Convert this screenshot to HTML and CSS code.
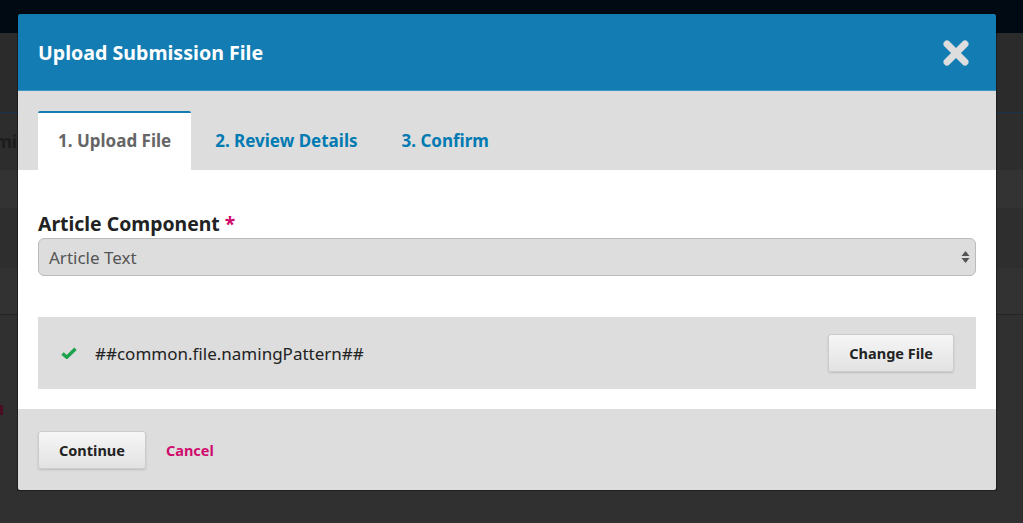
FILE: index.html
```html
<!DOCTYPE html>
<html lang="en">
<head>
  <meta charset="UTF-8">
  <meta name="viewport" content="width=device-width, initial-scale=1.0">
  <title>Upload Submission File</title>
  <link rel="stylesheet" href="styles.css">
</head>
<body>
  <div class="app">
    <div class="topbar"></div>
    <div class="bg-row bg-head"></div>
    <div class="bg-row bg-tabs"><span class="bg-tab-label">Submissions</span></div>
    <div class="bg-row bg-a"></div>
    <div class="bg-row bg-b"></div>
    <div class="bg-row bg-c"></div>
    <div class="bg-row bg-rest"><span class="bg-mark"></span></div>
  </div>

  <div class="modal">
    <div class="modal-header">
      <h1>Upload Submission File</h1>
      <button class="close" type="button" aria-label="Close">
        <svg width="26" height="26" viewBox="0 0 26 26">
          <path d="M4 4L22 22M22 4L4 22" stroke="#dddddd" stroke-width="7" stroke-linecap="round" fill="none"/>
        </svg>
      </button>
    </div>

    <div class="tabs">
      <a class="tab active">1. Upload File</a>
      <a class="tab">2. Review Details</a>
      <a class="tab">3. Confirm</a>
    </div>

    <div class="content">
      <label class="field-label" for="component">Article Component <span class="req">*</span></label>
      <div class="select">
        <span>Article Text</span>
        <span class="arrows">
          <svg width="9" height="14" viewBox="0 0 9 14">
            <path d="M4.5 1L8.5 6H0.5Z" fill="#555555"/>
            <path d="M4.5 13L8.5 8H0.5Z" fill="#555555"/>
          </svg>
        </span>
      </div>

      <div class="file-row">
        <svg class="check" width="16" height="12" viewBox="0 0 16 12">
          <path d="M1.5 6.5L5.8 10.3L14.5 1.8" stroke="#1ea24c" stroke-width="3.4" fill="none"/>
        </svg>
        <span class="file-name">##common.file.namingPattern##</span>
        <button class="btn" type="button">Change File</button>
      </div>
    </div>

    <div class="modal-footer">
      <button class="btn" type="button">Continue</button>
      <a class="cancel">Cancel</a>
    </div>
  </div>
</body>
</html>
```

FILE: styles.css
```css
body {
  margin: 0;
  font-family: "Noto Sans", "Open Sans", sans-serif;
  background-color: #303030;
  overflow: hidden;
}
.app {
  height: 523px;
}
.topbar {
  height: 33px;
  background-color: #010a12;
}
.bg-row {
  overflow: hidden;
}
.bg-head {
  height: 79px;
  background-color: #2b2b2b;
  border-bottom: 1px solid #15324a;
}
.bg-tabs {
  height: 57px;
  background-color: #2d2d2d;
}
.bg-tab-label {
  display: block;
  width: 18px;
  overflow: hidden;
  line-height: 57px;
  font-size: 17px;
  font-weight: bold;
  color: #1c1c1c;
  text-indent: -36px;
  white-space: nowrap;
}
.bg-a {
  height: 38px;
  background-color: #333;
}
.bg-b {
  height: 60px;
  background-color: #2e2e2e;
}
.bg-c {
  height: 46px;
  background-color: #323232;
  border-bottom: 1px solid #232323;
}
.bg-rest {
  height: 210px;
  background-color: #303030;
}
.bg-mark {
  display: block;
  width: 3px;
  height: 10px;
  margin-top: 90px;
  background-color: #4b0d24;
}

.modal {
  position: absolute;
  top: 14px;
  left: 18px;
  width: 978px;
  box-shadow: 0 0 0 1px rgba(0,0,0,0.35);
}
.modal-header {
  height: 76px;
  background-color: #137db3;
  border-bottom: 1px solid #3a95c4;
  border-radius: 2px 2px 0 0;
  display: flex;
  align-items: center;
  justify-content: space-between;
  padding: 0 27px 0 20px;
}
.modal-header h1 {
  margin: 0;
  font-size: 19.6px;
  font-weight: bold;
  color: #fff;
}
.close {
  background: none;
  border: none;
  padding: 0;
  margin-top: 2px;
  display: flex;
}

.tabs {
  background-color: #ddd;
  padding: 20px 20px 0;
  display: flex;
  gap: 4px;
}
.tab {
  height: 57px;
  line-height: 55px;
  padding: 0 20px;
  font-size: 17px;
  font-weight: bold;
  color: #007ab2;
  border-top: 2px solid transparent;
}
.tab.active {
  background-color: #fff;
  color: #666;
  border-top-color: #137db3;
  border-radius: 2px 2px 0 0;
}

.content {
  background-color: #fff;
  padding: 42px 20px 20px;
}
.field-label {
  display: block;
  font-size: 19.4px;
  font-weight: bold;
  color: #222;
  line-height: 24px;
  margin-bottom: 2px;
}
.req {
  color: #d00a6c;
}
.select {
  height: 36px;
  border: 1px solid #bbb;
  border-radius: 6px;
  background-color: #ddd;
  display: flex;
  align-items: center;
  justify-content: space-between;
  padding: 0 5px 0 10px;
  font-size: 17px;
  color: #555;
}
.arrows {
  display: flex;
}
.file-row {
  margin-top: 41px;
  height: 72px;
  background-color: #ddd;
  display: flex;
  align-items: center;
  padding: 0 22px 0 23px;
}
.check {
  margin-right: 18px;
}
.file-name {
  flex: 1;
  font-size: 17px;
  color: #222;
}
.btn {
  height: 38px;
  padding: 0 20px;
  font-family: inherit;
  font-size: 14.5px;
  font-weight: bold;
  color: #222;
  background: linear-gradient(#f6f6f6, #e2e2e2);
  border: 1px solid #ccc;
  border-radius: 3px;
  box-shadow: 0 1px 2px rgba(0,0,0,0.15);
}

.modal-footer {
  height: 81px;
  background-color: #ddd;
  display: flex;
  align-items: center;
  padding: 0 20px;
  border-radius: 0 0 2px 2px;
}
.cancel {
  margin-left: 20px;
  font-size: 14.5px;
  font-weight: bold;
  color: #d00a6c;
}
```
